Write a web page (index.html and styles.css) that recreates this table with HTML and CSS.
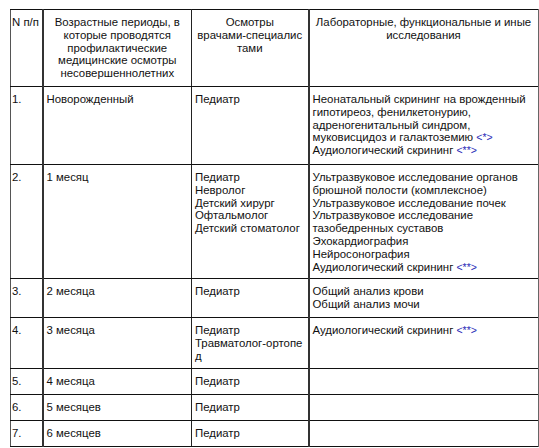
FILE: index.html
```html
<!DOCTYPE html>
<html lang="ru">
<head>
<meta charset="utf-8">
<link rel="stylesheet" href="styles.css">
</head>
<body>
<div class="page">
<table class="grid">
  <colgroup>
    <col class="c1"><col class="c2"><col class="c3"><col class="c4">
  </colgroup>
  <tr class="head">
    <th class="num">N п/п</th>
    <th>Возрастные периоды, в которые проводятся профилактические медицинские осмотры несовершеннолетних</th>
    <th>Осмотры<br>врачами-специалис<br>тами</th>
    <th>Лабораторные, функциональные и иные исследования</th>
  </tr>
  <tr class="r1">
    <td class="num">1.</td>
    <td>Новорожденный</td>
    <td>Педиатр</td>
    <td>Неонатальный скрининг на врожденный гипотиреоз, фенилкетонурию, адреногенитальный синдром, муковисцидоз и галактоземию <span class="ref">&lt;*&gt;</span><br>Аудиологический скрининг <span class="ref">&lt;**&gt;</span></td>
  </tr>
  <tr class="r2">
    <td class="num">2.</td>
    <td>1 месяц</td>
    <td>Педиатр<br>Невролог<br>Детский хирург<br>Офтальмолог<br>Детский стоматолог</td>
    <td>Ультразвуковое исследование органов брюшной полости (комплексное)<br>Ультразвуковое исследование почек<br>Ультразвуковое исследование тазобедренных суставов<br>Эхокардиография<br>Нейросонография<br>Аудиологический скрининг <span class="ref">&lt;**&gt;</span></td>
  </tr>
  <tr class="r3">
    <td class="num">3.</td>
    <td>2 месяца</td>
    <td>Педиатр</td>
    <td>Общий анализ крови<br>Общий анализ мочи</td>
  </tr>
  <tr class="r4">
    <td class="num">4.</td>
    <td>3 месяца</td>
    <td>Педиатр<br>Травматолог-ортопе<br>д</td>
    <td>Аудиологический скрининг <span class="ref">&lt;**&gt;</span></td>
  </tr>
  <tr class="r5">
    <td class="num">5.</td>
    <td>4 месяца</td>
    <td>Педиатр</td>
    <td></td>
  </tr>
  <tr class="r5">
    <td class="num">6.</td>
    <td>5 месяцев</td>
    <td>Педиатр</td>
    <td></td>
  </tr>
  <tr class="r5">
    <td class="num">7.</td>
    <td>6 месяцев</td>
    <td>Педиатр</td>
    <td></td>
  </tr>
</table>
</div>
</body>
</html>
```
FILE: styles.css
```css
html, body {
  margin: 0;
  padding: 0;
  background: #fff;
}
.page {
  padding: 9px 0 0 10px;
}
.grid {
  border-collapse: collapse;
  table-layout: fixed;
  width: 528px;
  font-family: "Liberation Sans", Arial, sans-serif;
  font-size: 11.4px;
  line-height: 12.8px;
  color: #111;
  border: 1px solid #555;
}
.c1 { width: 32px; }
.c2 { width: 149px; }
.c3 { width: 117px; }
.c4 { width: 230px; }
.grid th, .grid td {
  vertical-align: top;
  text-align: left;
  font-weight: normal;
  padding: 6px 3px 0 3px;
  border-top: 1px solid #111;
  border-bottom: 1px solid #111;
  border-left: 1px solid #222;
  border-right: 1px solid #222;
  white-space: normal;
}
.grid th {
  text-align: center;
}
.grid th.num {
  text-align: left;
  padding-left: 1px;
  padding-right: 0;
}
.grid td.num {
  padding-left: 1px;
}
.grid tr > :first-child {
  border-left: 1px solid #555;
  border-right: 2px solid #333;
}
.grid tr > :nth-child(3) {
  border-right: 2px solid #333;
}
.grid tr > :last-child {
  border-right: 2px solid #666;
}
.head { height: 77px; }
.r1 { height: 78px; }
.r2 { height: 114px; }
.r3 { height: 39px; }
.r4 { height: 51px; }
.r5 { height: 26px; }
.ref {
  color: #2b2bb8;
  font-size: 10.5px;
  line-height: 12px;
}
```
